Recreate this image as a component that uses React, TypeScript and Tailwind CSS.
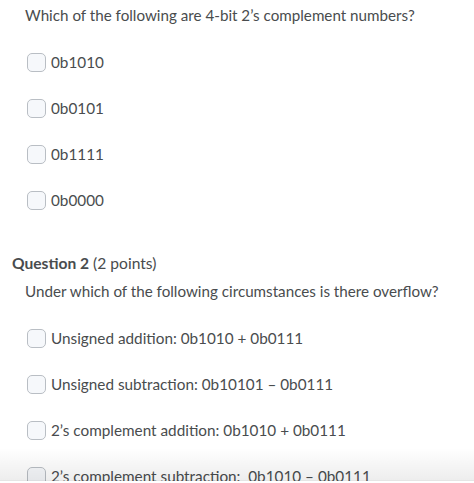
import React from "react";

const Option: React.FC<{ label: string }> = ({ label }) => (
  <label className="flex h-[46px] items-center pl-[27px]">
    <span className="h-[19px] w-[19px] shrink-0 rounded-[5px] border border-[#b9bec4] bg-[#f6f8fb]" />
    <span className="ml-[5px] whitespace-pre text-[15.3px] leading-6">{label}</span>
  </label>
);

const App: React.FC = () => {
  const q1 = ["0b1010", "0b0101", "0b1111", "0b0000"];
  const q2 = [
    "Unsigned addition: 0b1010 + 0b0111",
    "Unsigned subtraction: 0b10101 \u2013 0b0111",
    "2\u2019s complement addition: 0b1010 + 0b0111",
    "2\u2019s complement subtraction:  0b1010 \u2013 0b0111",
  ];

  return (
    <div className="relative h-[483px] w-[474px] overflow-hidden bg-white font-['Lato',sans-serif] text-[#494c4e]">
      {/* Question 1 */}
      <p className="whitespace-nowrap pl-[25px] pt-[3px] text-[15.2px] leading-6">
        Which of the following are 4-bit 2’s complement numbers?
      </p>
      <div className="mt-[12px]">
        {q1.map((o) => (
          <Option key={o} label={o} />
        ))}
      </div>

      {/* Question 2 */}
      <h3 className="mt-[28px] whitespace-nowrap pl-[12px] text-[15.6px] leading-6">
        <span className="font-bold">Question 2</span> (2 points)
      </h3>
      <p className="mt-[4px] whitespace-nowrap pl-[25px] text-[15.2px] leading-6">
        Under which of the following circumstances is there overflow?
      </p>
      <div className="mt-[12px]">
        {q2.map((o) => (
          <Option key={o} label={o} />
        ))}
      </div>

      {/* bottom bar shadow */}
      <div className="pointer-events-none absolute inset-x-0 bottom-0 h-[35px] border-b-2 border-b-white">
        <div className="h-[32px] bg-gradient-to-b from-transparent to-black/[0.07]" />
        <div className="h-px bg-black/10" />
      </div>
    </div>
  );
};

export default App;
